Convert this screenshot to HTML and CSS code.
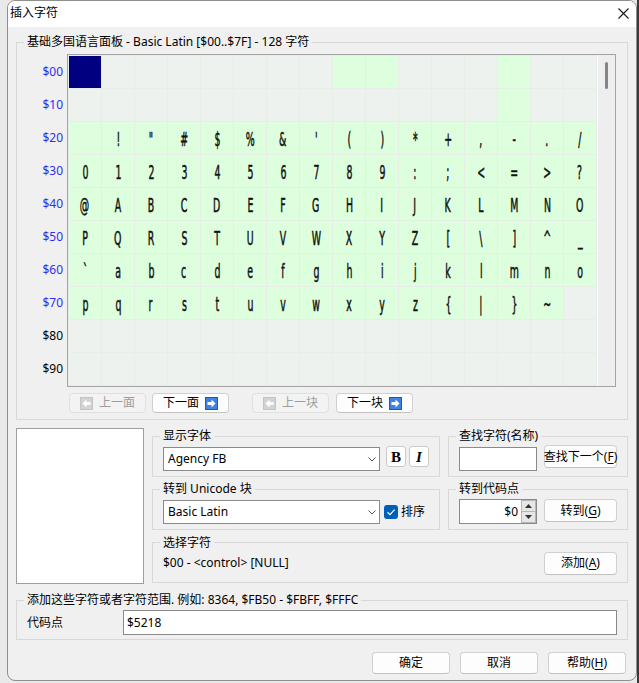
FILE: index.html
```html
<!DOCTYPE html>
<html lang="zh-CN">
<head>
<meta charset="utf-8">
<title>插入字符</title>
<link rel="stylesheet" href="styles.css">
</head>
<body>
<div class="desk">
  <div class="dlg">
    <div class="titlebar">
      <span class="title">插入字符</span>
      <svg class="close" width="11" height="11" viewBox="0 0 11 11"><path d="M0.5 0.5L10.5 10.5M10.5 0.5L0.5 10.5" stroke="#1a1a1a" stroke-width="1.1" fill="none"/></svg>
    </div>
    <div class="content">
      <fieldset class="grp charmap">
        <legend>基础多国语言面板 - Basic Latin [$00..$7F] - 128 字符</legend>
        <div class="maprow">
          <div class="rowlabels">
            <span class="hl">$00</span><span class="hl">$10</span><span class="hl">$20</span><span class="hl">$30</span><span class="hl">$40</span><span class="hl">$50</span><span class="hl">$60</span><span class="hl">$70</span><span>$80</span><span>$90</span>
          </div>
          <div class="mapbox">
            <div class="cells">
              <div class="s"></div><div class="c"></div><div class="c"></div><div class="c"></div><div class="c"></div><div class="c"></div><div class="c"></div><div class="c"></div><div class="g"></div><div class="g"></div><div class="c"></div><div class="c"></div><div class="c"></div><div class="g"></div><div class="c"></div><div class="c"></div>
              <div class="c"></div><div class="c"></div><div class="c"></div><div class="c"></div><div class="c"></div><div class="c"></div><div class="c"></div><div class="c"></div><div class="c"></div><div class="c"></div><div class="c"></div><div class="c"></div><div class="c"></div><div class="g"></div><div class="c"></div><div class="c"></div>
              <div class="g"></div><div class="g"><span>!</span></div><div class="g"><span>"</span></div><div class="g"><span>#</span></div><div class="g"><span>$</span></div><div class="g"><span>%</span></div><div class="g"><span>&amp;</span></div><div class="g"><span>'</span></div><div class="g"><span>(</span></div><div class="g"><span>)</span></div><div class="g"><span>*</span></div><div class="g"><span>+</span></div><div class="g"><span>,</span></div><div class="g"><span>-</span></div><div class="g"><span>.</span></div><div class="g"><span>/</span></div>
              <div class="g"><span>0</span></div><div class="g"><span>1</span></div><div class="g"><span>2</span></div><div class="g"><span>3</span></div><div class="g"><span>4</span></div><div class="g"><span>5</span></div><div class="g"><span>6</span></div><div class="g"><span>7</span></div><div class="g"><span>8</span></div><div class="g"><span>9</span></div><div class="g"><span>:</span></div><div class="g"><span>;</span></div><div class="g"><span>&lt;</span></div><div class="g"><span>=</span></div><div class="g"><span>&gt;</span></div><div class="g"><span>?</span></div>
              <div class="g"><span>@</span></div><div class="g"><span>A</span></div><div class="g"><span>B</span></div><div class="g"><span>C</span></div><div class="g"><span>D</span></div><div class="g"><span>E</span></div><div class="g"><span>F</span></div><div class="g"><span>G</span></div><div class="g"><span>H</span></div><div class="g"><span>I</span></div><div class="g"><span>J</span></div><div class="g"><span>K</span></div><div class="g"><span>L</span></div><div class="g"><span>M</span></div><div class="g"><span>N</span></div><div class="g"><span>O</span></div>
              <div class="g"><span>P</span></div><div class="g"><span>Q</span></div><div class="g"><span>R</span></div><div class="g"><span>S</span></div><div class="g"><span>T</span></div><div class="g"><span>U</span></div><div class="g"><span>V</span></div><div class="g"><span>W</span></div><div class="g"><span>X</span></div><div class="g"><span>Y</span></div><div class="g"><span>Z</span></div><div class="g"><span>[</span></div><div class="g"><span>\</span></div><div class="g"><span>]</span></div><div class="g"><span>^</span></div><div class="g"><span>_</span></div>
              <div class="g"><span>`</span></div><div class="g"><span>a</span></div><div class="g"><span>b</span></div><div class="g"><span>c</span></div><div class="g"><span>d</span></div><div class="g"><span>e</span></div><div class="g"><span>f</span></div><div class="g"><span>g</span></div><div class="g"><span>h</span></div><div class="g"><span>i</span></div><div class="g"><span>j</span></div><div class="g"><span>k</span></div><div class="g"><span>l</span></div><div class="g"><span>m</span></div><div class="g"><span>n</span></div><div class="g"><span>o</span></div>
              <div class="g"><span>p</span></div><div class="g"><span>q</span></div><div class="g"><span>r</span></div><div class="g"><span>s</span></div><div class="g"><span>t</span></div><div class="g"><span>u</span></div><div class="g"><span>v</span></div><div class="g"><span>w</span></div><div class="g"><span>x</span></div><div class="g"><span>y</span></div><div class="g"><span>z</span></div><div class="g"><span>{</span></div><div class="g"><span>|</span></div><div class="g"><span>}</span></div><div class="g"><span>~</span></div><div class="c"></div>
              <div class="c"></div><div class="c"></div><div class="c"></div><div class="c"></div><div class="c"></div><div class="c"></div><div class="c"></div><div class="c"></div><div class="c"></div><div class="c"></div><div class="c"></div><div class="c"></div><div class="c"></div><div class="c"></div><div class="c"></div><div class="c"></div>
              <div class="c"></div><div class="c"></div><div class="c"></div><div class="c"></div><div class="c"></div><div class="c"></div><div class="c"></div><div class="c"></div><div class="c"></div><div class="c"></div><div class="c"></div><div class="c"></div><div class="c"></div><div class="c"></div><div class="c"></div><div class="c"></div>
            </div>
            <div class="vscroll"><span class="thumb"></span></div>
          </div>
        </div>
        <div class="navbtns">
          <button class="btn nav dis"><svg width="13" height="13" viewBox="0 0 13 13"><rect x="0.5" y="0.5" width="12" height="12" fill="#d3d3d3" stroke="#c4c4c4"/><path d="M10.5 5H6.5V2.5L2.5 6.5L6.5 10.5V8H10.5Z" fill="#fff"/></svg><span>上一面</span></button>
          <button class="btn nav b2"><span>下一面</span><svg width="13" height="13" viewBox="0 0 13 13"><rect x="0.5" y="0.5" width="12" height="12" fill="#3f82e4" stroke="#2457b5"/><path d="M2.5 5H6.5V2.5L10.5 6.5L6.5 10.5V8H2.5Z" fill="#fff"/></svg></button>
          <button class="btn nav dis b3"><svg width="13" height="13" viewBox="0 0 13 13"><rect x="0.5" y="0.5" width="12" height="12" fill="#d3d3d3" stroke="#c4c4c4"/><path d="M10.5 5H6.5V2.5L2.5 6.5L6.5 10.5V8H10.5Z" fill="#fff"/></svg><span>上一块</span></button>
          <button class="btn nav b4"><span>下一块</span><svg width="13" height="13" viewBox="0 0 13 13"><rect x="0.5" y="0.5" width="12" height="12" fill="#3f82e4" stroke="#2457b5"/><path d="M2.5 5H6.5V2.5L10.5 6.5L6.5 10.5V8H2.5Z" fill="#fff"/></svg></button>
        </div>
      </fieldset>

      <div class="lower">
        <div class="preview"></div>

        <fieldset class="grp">
          <legend>显示字体</legend>
          <div class="field">
            <div class="combo"><span>Agency FB</span><svg width="8" height="5" viewBox="0 0 8 5"><path d="M0.5 0.5L4 4L7.5 0.5" stroke="#555" fill="none"/></svg></div>
            <button class="btn sq bold">B</button>
            <button class="btn sq ital">I</button>
          </div>
        </fieldset>

        <fieldset class="grp">
          <legend>查找字符(名称)</legend>
          <div class="field side">
            <div class="edit short"></div>
            <button class="btn act up2">查找下一个(<u>F</u>)</button>
          </div>
        </fieldset>

        <fieldset class="grp">
          <legend>转到 Unicode 块</legend>
          <div class="field">
            <div class="combo"><span>Basic Latin</span><svg width="8" height="5" viewBox="0 0 8 5"><path d="M0.5 0.5L4 4L7.5 0.5" stroke="#555" fill="none"/></svg></div>
            <svg class="check" width="14" height="14" viewBox="0 0 14 14"><rect width="14" height="14" rx="3" fill="#005fb8"/><path d="M3.5 7.2L6 9.6L10.6 4.6" stroke="#fff" stroke-width="1.2" fill="none"/></svg>
            <span class="chklabel">排序</span>
          </div>
        </fieldset>

        <fieldset class="grp">
          <legend>转到代码点</legend>
          <div class="field side">
            <div class="spin"><span class="val">$0</span><span class="arrows"><span class="ar"><svg width="7" height="4" viewBox="0 0 7 4"><path d="M0 4L3.5 0L7 4Z" fill="#333"/></svg></span><span class="ar"><svg width="7" height="4" viewBox="0 0 7 4"><path d="M0 0L3.5 4L7 0Z" fill="#333"/></svg></span></span></div>
            <button class="btn act up1">转到(<u>G</u>)</button>
          </div>
        </fieldset>

        <fieldset class="grp sel">
          <legend>选择字符</legend>
          <div class="selrow">
            <span>$00 - &lt;control&gt; [NULL]</span>
            <button class="btn act">添加(<u>A</u>)</button>
          </div>
        </fieldset>
      </div>

      <fieldset class="grp add">
        <legend>添加这些字符或者字符范围. 例如: 8364, $FB50 - $FBFF, $FFFC</legend>
        <div class="addrow">
          <span class="addlabel">代码点</span>
          <div class="edit wide">$5218</div>
        </div>
      </fieldset>

      <div class="footer">
        <button class="btn foot">确定</button>
        <button class="btn foot">取消</button>
        <button class="btn foot">帮助(<u>H</u>)</button>
      </div>
    </div>
  </div>
</div>
</body>
</html>
```

FILE: styles.css
```css
* { box-sizing: border-box; }
html, body { margin: 0; padding: 0; }
body {
  width: 639px;
  height: 683px;
  overflow: hidden;
  font-family: "Noto Sans", "Noto Sans CJK SC", sans-serif;
  font-size: 12px;
  color: #000;
  background: #e8e8e8;
}
.desk {
  width: 639px;
  height: 683px;
  display: flex;
  padding-left: 7px;
  background: linear-gradient(to right, #e9e9e9 0, #e9e9e9 637px, #3a3a3a 637px);
}
.dlg {
  width: 630px;
  height: 681px;
  border: 1px solid #8f8f8f;
  border-radius: 8px;
  background: #f0f0f0;
  overflow: hidden;
  display: flex;
  flex-direction: column;
}
.titlebar {
  flex: none;
  height: 26px;
  background: #fff;
  display: flex;
  align-items: center;
  justify-content: space-between;
  padding: 0 7px 0 2px;
}
.title { line-height: 16px; margin-top: -2px; }
.close { margin-top: -2px; }

.content { padding: 7px 8px 0; }

fieldset.grp {
  margin: 0;
  padding: 0;
  min-width: 0;
  border: 1px solid #d8d8d8;
}
fieldset.grp legend {
  padding: 0 3px;
  margin-left: 7px;
  line-height: 16px;
  font-size: 12px;
  white-space: nowrap;
}

/* character map */
.maprow { display: flex; margin-top: 4px; }
.rowlabels {
  width: 46px;
  margin-right: 4px;
  padding-top: 2px;
  display: flex;
  flex-direction: column;
  align-items: flex-end;
  gap: 1px;
}
.rowlabels span { height: 32px; line-height: 32px; }
.rowlabels .hl { color: #2e2ef2; }
.mapbox { display: flex; border: 1px solid #a3a3a3; }
.cells {
  display: grid;
  grid-template-columns: repeat(16, 32px);
  grid-auto-rows: 32px;
  gap: 1px;
  padding: 1px;
  background: #e7ede7;
}
.cells .c { background: #eef2ee; }
.cells .g {
  background: #ddffdd;
  display: flex;
  justify-content: center;
  align-items: center;
}
.cells .s { background: #000080; }
.cells .g span {
  display: inline-block;
  font-family: "DejaVu Sans Condensed", "DejaVu Sans", sans-serif;
  font-weight: normal;
  font-size: 19px;
  line-height: 32px;
  transform: scaleX(0.55);
  -webkit-text-stroke: 0.5px #111;
  margin-top: 2px;
  color: #111;
}
.vscroll {
  width: 18px;
  border-left: 1px solid #fff;
  background: #eeeeee;
  padding: 7px 0 0 7px;
}
.thumb {
  display: block;
  width: 3px;
  height: 27px;
  background: #858585;
  border-radius: 2px;
}

.btn {
  font-family: inherit;
  font-size: 12px;
  color: #000;
  background: #fdfdfd;
  border: 1px solid #d0d0d0;
  border-bottom-color: #c2c2c2;
  border-radius: 4px;
  padding: 0;
  margin: 0;
  display: flex;
  align-items: center;
  justify-content: center;
  white-space: nowrap;
  line-height: 16px;
}
.btn u { text-decoration: underline; text-underline-offset: 2px; }

.navbtns { display: flex; margin: 6px 0 6px 52px; }
.nav { width: 77px; height: 20px; gap: 6px; }
.nav.dis { color: #9c9c9c; background: #f3f3f3; border-color: #e0e0e0; }
.b2 { margin-left: 6px; }
.b3 { margin-left: 23px; }
.b4 { margin-left: 7px; }

/* lower section */
.lower {
  display: grid;
  grid-template-columns: 128px 288px 180px;
  column-gap: 8px;
  row-gap: 3px;
  margin-top: 8px;
  align-items: start;
}
.preview {
  grid-row: 1 / 4;
  height: 156px;
  background: #fff;
  border: 1px solid #9e9e9e;
}
.sel { grid-column: 2 / 4; }

.field {
  display: flex;
  align-items: center;
  margin: 3px 0 5px 10px;
}
.field.side { margin-left: 10px; }
.combo {
  width: 217px;
  height: 24px;
  background: #fff;
  border: 1px solid #8a8a8a;
  display: flex;
  align-items: center;
  justify-content: space-between;
  padding: 0 3px 0 4px;
}
.combo span { line-height: 16px; }
.sq {
  width: 20px;
  height: 21px;
  align-self: flex-start;
  margin-top: -1px;
  border-radius: 3px;
  background: #fff;
  border-color: #c9c9c9;
  font-family: "Liberation Serif", serif;
  font-weight: bold;
  font-size: 15px;
}
.bold { margin-left: 6px; }
.ital { margin-left: 3px; font-style: italic; }
.check { margin-left: 4px; }
.chklabel { margin-left: 3px; line-height: 16px; }

.edit {
  background: #fff;
  border: 1px solid #8a8a8a;
  height: 24px;
}
.edit.short { width: 78px; }
.act { width: 73px; height: 23px; }
.side .act { margin-left: 7px; align-self: flex-start; }
.up2 { margin-top: -2px; }
.up1 { margin-top: -1px; }

.spin {
  width: 78px;
  height: 25px;
  background: #fff;
  border: 1px solid #8a8a8a;
  display: flex;
  align-items: stretch;
  justify-content: flex-end;
  margin-top: -1px;
}
.spin .val { align-self: center; line-height: 16px; margin-right: 3px; }
.arrows {
  width: 15px;
  display: flex;
  flex-direction: column;
}
.ar {
  flex: 1;
  display: flex;
  align-items: center;
  justify-content: center;
  background: #e6e6e6;
  border: 1px solid #b5b5b5;
}
.ar + .ar { border-top: none; }

.selrow {
  display: flex;
  align-items: center;
  justify-content: space-between;
  margin: 1px 10px 7px 10px;
}
.selrow span { line-height: 16px; }

fieldset.grp.add { margin-top: 8px; }
.addrow {
  display: flex;
  align-items: center;
  margin: 2px 10px 4px 10px;
}
.addlabel { width: 96px; line-height: 16px; }
.edit.wide {
  flex: 1;
  height: 25px;
  padding-left: 3px;
  line-height: 23px;
}

.footer {
  display: flex;
  justify-content: flex-end;
  gap: 10px;
  margin-top: 12px;
  padding-right: 2px;
}
.foot { width: 78px; height: 22px; }
```
